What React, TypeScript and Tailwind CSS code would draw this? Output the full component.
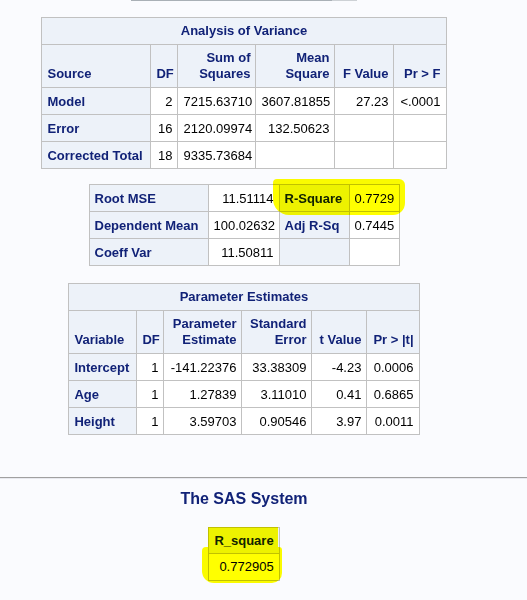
import React from 'react';

type Cell = { text: string; head?: boolean; align?: 'left' | 'right' | 'center' };

const FONT = { fontFamily: '"Liberation Sans", Arial, sans-serif' };

// one header/data cell in the SAS HTMLBlue style
function Td({ cell }: { cell: Cell }) {
  const base = 'border border-[#c1c1c1] px-[5px] py-0 h-[27px] align-middle text-[13px] leading-[15px] whitespace-nowrap';
  const look = cell.head ? 'bg-[#edf2f9] text-[#112277] font-bold' : 'bg-white text-black';
  const align = cell.align === 'right' ? 'text-right' : cell.align === 'center' ? 'text-center' : 'text-left';
  return <td className={`${base} ${look} ${align}`}>{cell.text}</td>;
}

function SasTable({
  title,
  widths,
  header,
  rows,
}: {
  title?: string;
  widths: number[];
  header?: string[][];
  rows: Cell[][];
}) {
  const total = widths.reduce((a, b) => a + b, 0);
  return (
    <table className="table-fixed border-collapse" style={{ width: total }}>
      <colgroup>
        {widths.map((w, i) => (
          <col key={i} style={{ width: w }} />
        ))}
      </colgroup>
      <tbody>
        {title && (
          <tr>
            <td
              colSpan={widths.length}
              className="border border-[#c1c1c1] bg-[#edf2f9] h-[27px] text-center align-middle text-[13px] font-bold text-[#112277]"
            >
              {title}
            </td>
          </tr>
        )}
        {header && (
          <tr>
            {header.map((lines, i) => (
              <td
                key={i}
                className={`border border-[#c1c1c1] bg-[#edf2f9] px-[5px] pb-[5px] pt-0 h-[43px] align-bottom text-[13px] leading-[16px] font-bold text-[#112277] whitespace-nowrap ${
                  i === 0 ? 'text-left' : 'text-right'
                }`}
              >
                {lines.map((l, j) => (
                  <div key={j}>{l}</div>
                ))}
              </td>
            ))}
          </tr>
        )}
        {rows.map((r, i) => (
          <tr key={i}>
            {r.map((c, j) => (
              <Td key={j} cell={c} />
            ))}
          </tr>
        ))}
      </tbody>
    </table>
  );
}

const h = (text: string): Cell => ({ text, head: true });
const n = (text: string): Cell => ({ text, align: 'right' });

export default function App() {
  return (
    <div className="w-[527px] min-h-[600px] bg-[#fafbfe]" style={FONT}>
      <div className="w-[488px] flex flex-col items-center">
        <div className="flex w-[226px] h-px">
          <div className="w-[201px] bg-[#a9b0b6]" />
          <div className="flex-1 bg-[#cdd1d5]" />
        </div>

        <div className="mt-[16px]">
          <SasTable
            title="Analysis of Variance"
            widths={[109, 27, 78, 79, 59, 52]}
            header={[['Source'], ['DF'], ['Sum of', 'Squares'], ['Mean', 'Square'], ['F Value'], ['Pr > F']]}
            rows={[
              [h('Model'), n('2'), n('7215.63710'), n('3607.81855'), n('27.23'), n('<.0001')],
              [h('Error'), n('16'), n('2120.09974'), n('132.50623'), n(''), n('')],
              [h('Corrected Total'), n('18'), n('9335.73684'), n(''), n(''), n('')],
            ]}
          />
        </div>

        <div className="relative mt-[15px]">
          <SasTable
            widths={[119, 71, 70, 50]}
            rows={[
              [h('Root MSE'), n('11.51114'), h('R-Square'), n('0.7729')],
              [h('Dependent Mean'), n('100.02632'), h('Adj R-Sq'), n('0.7445')],
              [h('Coeff Var'), n('11.50811'), h(''), n('')],
            ]}
          />
          {/* marker highlight over R-Square */}
          <div className="pointer-events-none absolute left-[184px] top-[-5px] h-[36px] w-[132px] rounded-[4px_6px_12px_16px] bg-[#ffff00] mix-blend-multiply" />
        </div>

        <div className="mt-[17px]">
          <SasTable
            title="Parameter Estimates"
            widths={[68, 27, 78, 70, 55, 52]}
            header={[['Variable'], ['DF'], ['Parameter', 'Estimate'], ['Standard', 'Error'], ['t Value'], ['Pr > |t|']]}
            rows={[
              [h('Intercept'), n('1'), n('-141.22376'), n('33.38309'), n('-4.23'), n('0.0006')],
              [h('Age'), n('1'), n('1.27839'), n('3.11010'), n('0.41'), n('0.6865')],
              [h('Height'), n('1'), n('3.59703'), n('0.90546'), n('3.97'), n('0.0011')],
            ]}
          />
        </div>
      </div>

      <div className="mt-[42px] h-px w-full bg-[#a0a0a0]" />
      <div className="h-px w-full bg-[#e8e9ef]" />

      <div className="w-[488px] flex flex-col items-center">
        <div className="mt-[10px] text-[16px] leading-[19px] font-bold text-[#112277]">The SAS System</div>

        <div className="relative mt-[19px]">
          <table className="border-collapse" style={{ width: 70 }}>
            <tbody>
              <tr>
                <td className="border border-[#c1c1c1] bg-[#edf2f9] h-[26px] px-[5px] text-right align-middle text-[13px] font-bold text-[#112277]">
                  R_square
                </td>
              </tr>
              <tr>
                <td className="border border-[#c1c1c1] bg-white h-[27px] px-[5px] text-right align-middle text-[13px] text-black">
                  0.772905
                </td>
              </tr>
            </tbody>
          </table>
          <div className="pointer-events-none absolute left-0 top-0 h-[26px] w-[70px] bg-[#ffff00] mix-blend-multiply" />
          <div className="pointer-events-none absolute left-[-6px] top-[20px] h-[36px] w-[80px] rounded-[4px_3px_10px_12px] bg-[#ffff00] mix-blend-multiply" />
        </div>
      </div>
    </div>
  );
}
